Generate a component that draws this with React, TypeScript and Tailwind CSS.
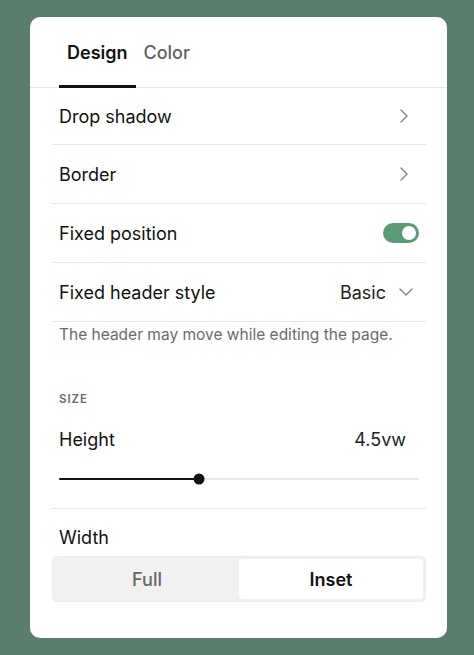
import { ChevronDown, ChevronRight } from "lucide-react";

const font = { fontFamily: "Inter, 'Noto Sans', sans-serif" };

function NavRow({ label, first }: { label: string; first?: boolean }) {
  return (
    <div
      className={`flex items-center justify-between border-b border-[#e6e6e6] pl-[7px] pr-[10px] ${
        first ? "h-[57px]" : "h-[59px]"
      }`}
    >
      <span className="text-[18px] text-[#111]">{label}</span>
      <ChevronRight className="h-6 w-6 text-[#8a8a8a]" strokeWidth={1.5} />
    </div>
  );
}

export default function App() {
  const fill = 39;
  return (
    <div className="h-[655px] w-full bg-[#5b7d6d] pt-[17px]" style={font}>
      <div className="ml-[30px] h-[621px] w-[417px] overflow-hidden rounded-[10px] bg-white">
        {/* tabs */}
        <div className="flex h-[71px] items-end border-b border-[#e6e6e6] pl-[29px]">
          <button className="relative flex h-[70px] items-center px-2 text-[18px] font-semibold text-[#111]">
            Design
            <span className="absolute bottom-[-1px] left-0 right-0 h-[3px] bg-[#111]" />
          </button>
          <button className="flex h-[70px] items-center px-2 text-[18px] font-medium text-[#5f5f5f]">
            Color
          </button>
        </div>

        <div className="pl-[22px] pr-[21px]">
          <NavRow label="Drop shadow" first />
          <NavRow label="Border" />

          <div className="flex h-[59px] items-center justify-between border-b border-[#e6e6e6] px-[7px]">
            <span className="text-[18px] text-[#111]">Fixed position</span>
            <div className="flex h-5 w-9 items-center justify-end rounded-full bg-[#5a9a74] p-[3px]">
              <div className="h-[14px] w-[14px] rounded-full bg-white" />
            </div>
          </div>

          <div className="flex h-[59px] items-center justify-between border-b border-[#e6e6e6] pl-[7px] pr-[8px]">
            <span className="text-[18px] text-[#111]">Fixed header style</span>
            <div className="flex items-center gap-[8px]">
              <span className="text-[18px] text-[#222]">Basic</span>
              <ChevronDown className="h-6 w-6 text-[#8a8a8a]" strokeWidth={1.5} />
            </div>
          </div>

          <p className="m-0 mt-[3px] pl-[7px] text-[15.5px] leading-[20px] text-[#6b6b6b]">
            The header may move while editing the page.
          </p>

          <div className="mt-[47px] pl-[7px] text-[11.5px] font-semibold uppercase leading-[14px] tracking-[0.08em] text-[#6b6b6b]">
            Size
          </div>

          <div className="mt-[21px] flex items-center justify-between pl-[7px] pr-[20px]">
            <span className="text-[18px] leading-[26px] text-[#111]">Height</span>
            <span className="text-[18px] leading-[26px] text-[#222]">4.5vw</span>
          </div>

          <div className="relative mx-[7px] mt-[25px] h-[2px] rounded-full bg-[#e8e8e8]">
            <div className="h-[2px] rounded-full bg-[#111]" style={{ width: `${fill}%` }} />
            <div
              className="absolute top-1/2 h-[11px] w-[11px] -translate-x-1/2 -translate-y-1/2 rounded-full bg-[#111]"
              style={{ left: `${fill}%` }}
            />
          </div>

          <div className="mt-[28px] border-b border-[#e6e6e6]" />

          <div className="mt-[16px] pl-[7px] text-[18px] leading-[26px] text-[#111]">Width</div>

          <div className="mt-[5px] grid h-[46px] grid-cols-2 rounded-[5px] border border-[#ececec] bg-[#f1f1f1] p-[2px]">
            <button className="flex items-center justify-center text-[18px] font-medium text-[#666]">
              Full
            </button>
            <button className="flex items-center justify-center rounded-[4px] bg-white text-[18px] font-semibold text-[#111]">
              Inset
            </button>
          </div>
        </div>
      </div>
    </div>
  );
}
